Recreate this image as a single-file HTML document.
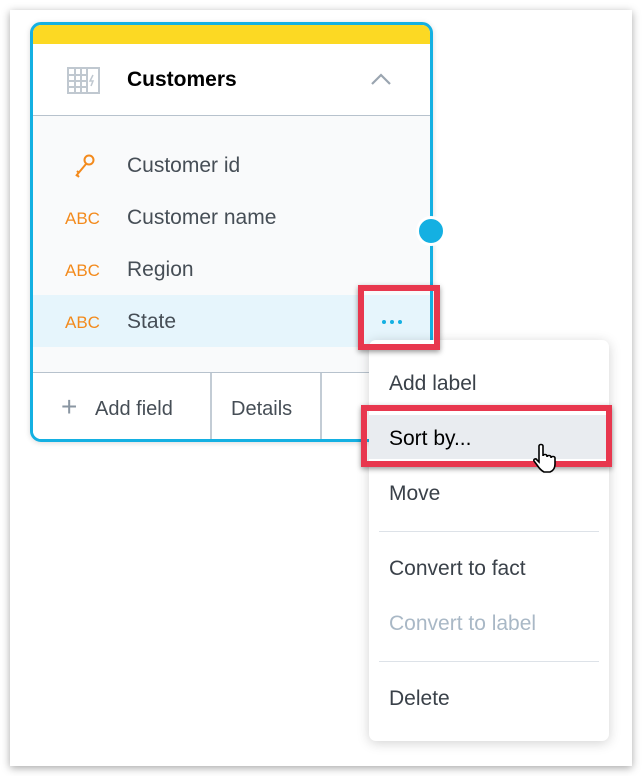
<!DOCTYPE html>
<html><head><style>
*{box-sizing:border-box;margin:0;padding:0}
body{width:642px;height:776px;background:#fff;position:relative;overflow:hidden;font-family:"Liberation Sans",sans-serif}
.frame{position:absolute;left:10px;top:10px;width:622px;height:756px;background:#fff;box-shadow:0 2px 8px rgba(0,0,0,.35)}
.card{position:absolute;left:30px;top:22px;width:403px;height:420px;border:3px solid #14b0e2;border-radius:11px;background:#f9fafb;overflow:hidden;box-shadow:0 1px 6px rgba(0,0,0,.15)}
.yel{position:absolute;left:0;top:0;right:0;height:19px;background:#fcd923}
.hdr{position:absolute;left:0;top:19px;right:0;height:72px;background:#fff;border-bottom:1px solid #b7c2cd}
.title{position:absolute;left:94px;top:24px;font-size:21px;font-weight:bold;color:#000}
.row{position:absolute;left:0;right:0;height:52px;font-size:21px;color:#464e56}
.row .t{position:absolute;left:94px;top:15px}
.row .a{position:absolute;left:32px;top:18px;font-size:17px;color:#f38a1c}
.foot{position:absolute;left:0;right:0;top:347px;height:70px;background:#fff;border-top:1px solid #b7c2cd;font-size:20px;color:#464e56}
.vd{position:absolute;top:0;bottom:0;width:2px;background:#c3ccd5}
.dot{position:absolute;left:416px;top:216px;width:30px;height:30px;border-radius:50%;background:#14b0e2;border:3px solid #fff}
.red{position:absolute;border:6px solid #e8374e;box-shadow:0 2px 5px rgba(0,0,0,.4)}
.menu{position:absolute;left:369px;top:340px;width:240px;height:401px;background:#fff;border-radius:7px;box-shadow:0 2px 12px rgba(0,0,0,.18);font-size:21px;color:#3a4149}
.mi{position:absolute;left:20px}
.sep{position:absolute;left:10px;right:10px;height:1px;background:#dde2e8}
</style></head><body>
<div class="frame"></div>
<div class="card">
 <div class="yel"></div>
 <div class="hdr">
  <svg style="position:absolute;left:34px;top:23px" width="33" height="27" viewBox="0 0 33 27"><rect x="1" y="1" width="31" height="25" fill="none" stroke="#c0c8d0" stroke-width="2"/><g stroke="#c0c8d0" stroke-width="2"><line x1="1" y1="8" x2="20" y2="8"/><line x1="1" y1="14" x2="20" y2="14"/><line x1="1" y1="20" x2="20" y2="20"/><line x1="8" y1="1" x2="8" y2="26"/><line x1="14" y1="1" x2="14" y2="26"/><line x1="20" y1="1" x2="20" y2="26"/></g><path d="M26 8l-3 6h3l-2 5" stroke="#c0c8d0" stroke-width="1.5" fill="none"/></svg>
  <div class="title">Customers</div>
  <svg style="position:absolute;left:338px;top:29px" width="20" height="12"><path d="M1 11L10 2L19 11" stroke="#9aa5b0" stroke-width="2.2" fill="none"/></svg>
 </div>
 <div class="row" style="top:114px"><svg style="position:absolute;left:40px;top:14px" width="24" height="26"><circle cx="16" cy="7" r="4.5" stroke="#f38a1c" stroke-width="2" fill="none"/><path d="M13 11L3 23M6 20l-2-2M4 22l2 2" stroke="#f38a1c" stroke-width="2" fill="none"/></svg><span class="t">Customer id</span></div>
 <div class="row" style="top:166px"><span class="a">ABC</span><span class="t">Customer name</span></div>
 <div class="row" style="top:218px"><span class="a">ABC</span><span class="t">Region</span></div>
 <div class="row" style="top:270px;background:#e6f5fc"><span class="a">ABC</span><span class="t">State</span>
  <svg style="position:absolute;left:348px;top:24px" width="26" height="6"><circle cx="3" cy="3" r="2" fill="#14b0e2"/><circle cx="11" cy="3" r="2" fill="#14b0e2"/><circle cx="19" cy="3" r="2" fill="#14b0e2"/></svg></div>
 <div class="foot">
  <span style="position:absolute;left:28px;top:20px;font-size:28px;color:#8a96a2;line-height:28px;font-weight:300">+</span>
  <span style="position:absolute;left:62px;top:25px">Add field</span>
  <div class="vd" style="left:177px"></div>
  <span style="position:absolute;left:198px;top:25px">Details</span>
  <div class="vd" style="left:287px"></div>
 </div>
</div>
<div class="dot"></div>
<div class="menu">
 <div class="mi" style="top:32px">Add label</div>
 <div style="position:absolute;left:0;right:0;top:75px;height:44px;background:#e9ecf0"></div>
 <div class="mi" style="top:87px;color:#000">Sort by...</div>
 <div class="mi" style="top:142px">Move</div>
 <div class="sep" style="top:191px"></div>
 <div class="mi" style="top:217px">Convert to fact</div>
 <div class="mi" style="top:272px;color:#a9b8c6">Convert to label</div>
 <div class="sep" style="top:321px"></div>
 <div class="mi" style="top:347px">Delete</div>
</div>
<div class="red" style="left:358px;top:285px;width:82px;height:65px"></div>
<div class="red" style="left:361px;top:405px;width:251px;height:62px"></div>
<svg style="position:absolute;left:532px;top:443px" width="32" height="32" viewBox="0 0 32 32"><path d="M7 3c0-2 4-2 4 0v10c0-2 4-2 4 0v1c0-2 4-2 4 0v1c0-2 4-2 4 0v6c0 4-2 7-5 8h-6c-2-1-5-4-7-7l-3-4c-1-2 2-3 3-1l2 2z" fill="#fff" stroke="#000" stroke-width="1.6"/></svg>
</body></html>
